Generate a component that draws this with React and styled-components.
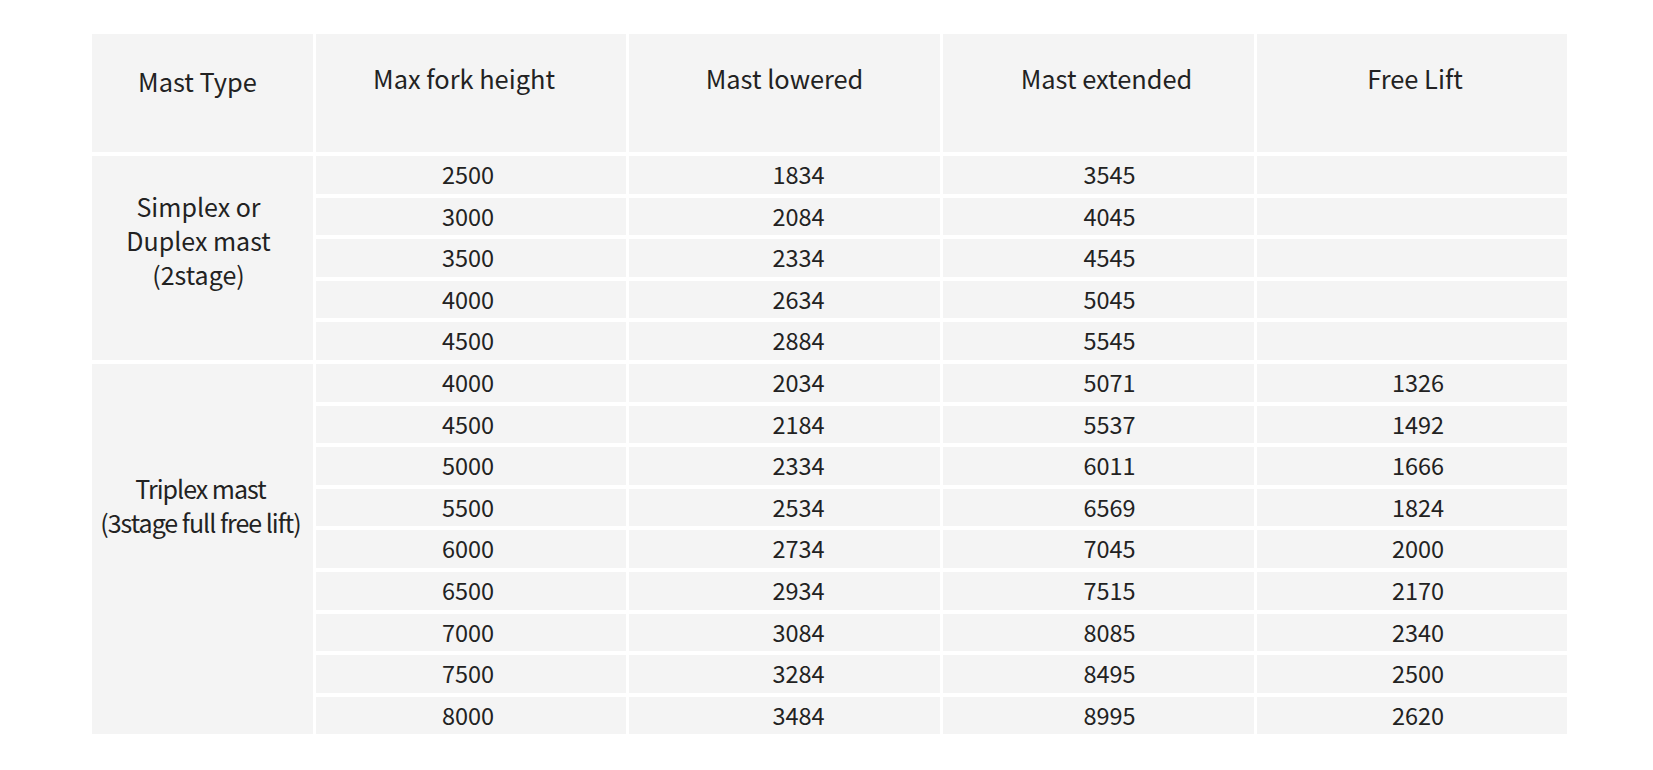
import React from "react";
import styled, { createGlobalStyle } from "styled-components";

const GlobalStyle = createGlobalStyle`
  body {
    margin: 0;
    background: #ffffff;
    font-family: "Noto Sans CJK SC", "Noto Sans", sans-serif;
    color: #222222;
  }
`;

const Page = styled.div`
  padding: 34px 0 0 92px;
`;

const Table = styled.div`
  display: grid;
  grid-template-columns: 221px 310px 311px 311px 310px;
  grid-template-rows: 118px repeat(14, 37.6px);
  column-gap: 3px;
  row-gap: 4px;
  width: max-content;
`;

// shift the centred text sideways by padding one side
const nudge = (p) =>
  p.$shift > 0
    ? `padding-left: ${p.$shift * 2}px;`
    : `padding-right: ${-(p.$shift || 0) * 2}px;`;

const HeadCell = styled.div`
  background: #f4f4f4;
  display: flex;
  justify-content: center;
  align-items: flex-start;
  padding-top: ${(p) => (p.$low ? 30 : 27)}px;
  ${nudge}
  box-sizing: border-box;
  font-size: 25.4px;
  line-height: 34px;
`;

const GroupCell = styled.div`
  grid-row: span ${(p) => p.$span};
  background: #f4f4f4;
  display: flex;
  align-items: center;
  justify-content: center;
  text-align: center;
  padding-bottom: ${(p) => p.$lift}px;
  ${nudge}
  box-sizing: border-box;
  font-size: 25px;
  line-height: 33.7px;
  letter-spacing: ${(p) => p.$tight}px;
`;

const Cell = styled.div`
  background: #f4f4f4;
  display: flex;
  align-items: center;
  justify-content: center;
  ${nudge}
  box-sizing: border-box;
  font-size: 23.5px;
  line-height: 1;
`;

const headers = [
  ["Mast Type", -5],
  ["Max fork height", -7],
  ["Mast lowered", 0],
  ["Mast extended", 8],
  ["Free Lift", 3],
];

const colShift = [-3, 14, 11, 6];

const groups = [
  {
    label: ["Simplex or", "Duplex mast", "(2stage)"],
    lift: 34,
    tight: 0,
    shift: -4,
    rows: [
      ["2500", "1834", "3545", ""],
      ["3000", "2084", "4045", ""],
      ["3500", "2334", "4545", ""],
      ["4000", "2634", "5045", ""],
      ["4500", "2884", "5545", ""],
    ],
  },
  {
    label: ["Triplex mast", "(3stage full free lift)"],
    lift: 86,
    tight: -1,
    shift: -2,
    rows: [
      ["4000", "2034", "5071", "1326"],
      ["4500", "2184", "5537", "1492"],
      ["5000", "2334", "6011", "1666"],
      ["5500", "2534", "6569", "1824"],
      ["6000", "2734", "7045", "2000"],
      ["6500", "2934", "7515", "2170"],
      ["7000", "3084", "8085", "2340"],
      ["7500", "3284", "8495", "2500"],
      ["8000", "3484", "8995", "2620"],
    ],
  },
];

export default function App() {
  return (
    <Page>
      <GlobalStyle />
      <Table>
        {headers.map(([h, s], i) => (
          <HeadCell key={h} $low={i === 0} $shift={s}>
            {h}
          </HeadCell>
        ))}
        {groups.map((g, gi) => (
          <React.Fragment key={gi}>
            <GroupCell
              $span={g.rows.length}
              $lift={g.lift}
              $tight={g.tight}
              $shift={g.shift}
            >
              <div>
                {g.label.map((l) => (
                  <div key={l}>{l}</div>
                ))}
              </div>
            </GroupCell>
            {g.rows.flatMap((r, ri) =>
              r.map((v, ci) => (
                <Cell key={`${gi}-${ri}-${ci}`} $shift={colShift[ci]}>
                  {v}
                </Cell>
              ))
            )}
          </React.Fragment>
        ))}
      </Table>
    </Page>
  );
}
